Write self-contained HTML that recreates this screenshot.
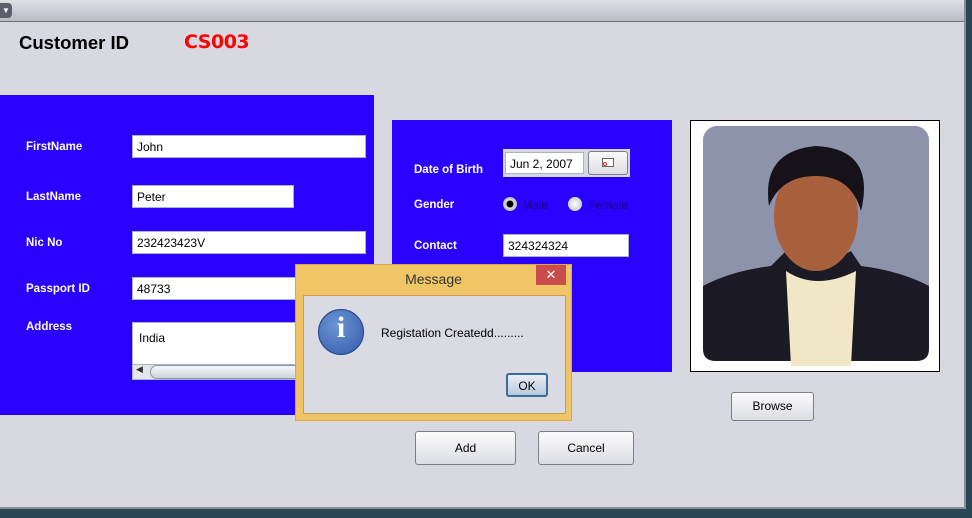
<!DOCTYPE html>
<html><head><style>
*{margin:0;padding:0;box-sizing:border-box}
body{width:972px;height:518px;background:#2b4655;position:relative;overflow:hidden;font-family:"Liberation Sans",sans-serif}
.a{position:absolute}
.frame{left:0;top:0;width:966px;height:509px;background:#d8d9e0;border-right:2px solid #8a8d95;border-bottom:2px solid #8a8d95}
.top{left:0;top:0;width:964px;height:22px;background:linear-gradient(#e0e1e6,#b9bbc3);border-bottom:1px solid #6d7078}
.lbl{color:#fff;font-weight:bold;font-size:11.5px;font-family:"Liberation Sans",sans-serif}
.in{background:#fff;border:1px solid #a9b3c3;font-size:12px;padding:4px 0 0 4px;color:#000}
.btn{border:1px solid #7a7e88;border-radius:3px;background:linear-gradient(#fbfbfc,#dcdde2);font-size:12px;text-align:center;color:#000}
</style></head><body>
<div class="a frame"></div>
<div class="a top"></div>
<div class="a" style="left:0;top:3px;width:12px;height:15px;background:#5a5f6a;border-radius:0 4px 4px 0;color:#fff;font-size:8px;line-height:15px;text-align:center">▼</div>
<div class="a" style="left:19px;top:32px;font-size:18.5px;font-weight:bold;font-family:'Liberation Sans',sans-serif">Customer ID</div>
<div class="a" style="left:184px;top:31px;font-size:19px;font-weight:bold;color:#f00;font-family:'DejaVu Sans',sans-serif;letter-spacing:-0.5px">CS003</div>

<div class="a" style="left:0;top:95px;width:374px;height:320px;background:#2a00ff"></div>
<div class="a lbl" style="left:26px;top:141px">FirstName</div>
<div class="a lbl" style="left:26px;top:191px">LastName</div>
<div class="a lbl" style="left:26px;top:237px">Nic No</div>
<div class="a lbl" style="left:26px;top:283px">Passport ID</div>
<div class="a lbl" style="left:26px;top:321px">Address</div>
<div class="a in" style="left:132px;top:135px;width:234px;height:23px">John</div>
<div class="a in" style="left:132px;top:185px;width:162px;height:23px">Peter</div>
<div class="a in" style="left:132px;top:231px;width:234px;height:23px">232423423V</div>
<div class="a in" style="left:132px;top:277px;width:180px;height:23px">48733</div>
<div class="a in" style="left:132px;top:322px;width:180px;height:58px;padding:8px 0 0 6px">India</div>
<div class="a" style="left:133px;top:364px;width:178px;height:15px;background:#e4e6ea;border-top:1px solid #a9b3c3"></div>
<div class="a" style="left:136px;top:364px;font-size:9px;color:#333">◀</div>
<div class="a" style="left:150px;top:365px;width:160px;height:14px;border:1px solid #8b98aa;border-radius:8px 0 0 8px;background:linear-gradient(#f4f6f8,#cdd4dc)"></div>

<div class="a" style="left:392px;top:120px;width:280px;height:252px;background:#2a00ff"></div>
<div class="a lbl" style="left:414px;top:164px">Date of Birth</div>
<div class="a lbl" style="left:414px;top:199px">Gender</div>
<div class="a lbl" style="left:414px;top:240px">Contact</div>
<div class="a" style="left:503px;top:149px;width:127px;height:28px;background:#d8d9e0"></div>
<div class="a in" style="left:505px;top:152px;width:79px;height:22px">Jun 2, 2007</div>
<div class="a btn" style="left:588px;top:151px;width:40px;height:24px"></div>
<div class="a" style="left:602px;top:158px;width:12px;height:9px;border:1px solid #666;background:#fff"></div>
<div class="a" style="left:603px;top:162px;width:4px;height:4px;border-radius:50%;border:1px solid #d22"></div>
<div class="a" style="left:503px;top:197px;width:14px;height:14px;border-radius:50%;background:radial-gradient(#000 30%,#ddd 40%,#999)"></div>
<div class="a" style="left:522px;top:198px;font-size:12px;color:#1a0080">Male</div>
<div class="a" style="left:568px;top:197px;width:14px;height:14px;border-radius:50%;background:radial-gradient(#fff,#bbb)"></div>
<div class="a" style="left:588px;top:198px;font-size:12px;color:#1a0080">Female</div>
<div class="a in" style="left:503px;top:234px;width:126px;height:23px">324324324</div>

<div class="a" style="left:690px;top:120px;width:250px;height:252px;background:#fff;border:1px solid #000;overflow:hidden">
<svg width="250" height="252" viewBox="0 0 250 252">
<rect x="12" y="5" width="226" height="235" rx="14" fill="#8c93aa"/>
<path d="M12 165 Q40 150 80 145 L95 130 Q125 150 160 130 L170 145 Q210 150 238 165 L238 228 Q238 240 225 240 L25 240 Q12 240 12 228Z" fill="#1c1a24"/>
<path d="M95 150 Q125 170 165 150 L160 245 L100 245Z" fill="#efe7c6"/>
<ellipse cx="125" cy="95" rx="42" ry="55" fill="#a8603c"/>
<path d="M78 85 Q70 30 125 25 Q185 28 170 90 Q160 55 125 55 Q90 55 78 85Z" fill="#17121a"/>
</svg></div>
<div class="a btn" style="left:731px;top:392px;width:83px;height:29px;line-height:27px">Browse</div>
<div class="a btn" style="left:415px;top:431px;width:101px;height:34px;line-height:33px">Add</div>
<div class="a btn" style="left:538px;top:431px;width:96px;height:34px;line-height:33px">Cancel</div>

<div class="a" style="left:295px;top:264px;width:277px;height:157px;background:#f0c565;border:1px solid #d9a84a"></div>
<div class="a" style="left:295px;top:271px;width:277px;text-align:center;font-size:14px;color:#333">Message</div>
<div class="a" style="left:536px;top:265px;width:30px;height:20px;background:#c94d4b;color:#fff;font-size:13px;text-align:center;line-height:19px">✕</div>
<div class="a" style="left:303px;top:295px;width:263px;height:119px;background:#d9dae2;border:1px solid #c6a050"></div>
<div class="a" style="left:318px;top:309px;width:46px;height:46px;border-radius:50%;background:radial-gradient(circle at 40% 35%,#6f95d6,#2f5aa8);border:1px solid #23448a"></div>
<div class="a" style="left:318px;top:311px;width:46px;text-align:center;color:#fff;font:bold 30px 'Liberation Serif',serif">i</div>
<div class="a" style="left:381px;top:326px;font-size:12px;color:#000">Registation Createdd.........</div>
<div class="a btn" style="left:506px;top:373px;width:42px;height:24px;line-height:22px;border:2px solid #3c6a9a;background:linear-gradient(#e8eef5,#b9c9db)">OK</div>
</body></html>
